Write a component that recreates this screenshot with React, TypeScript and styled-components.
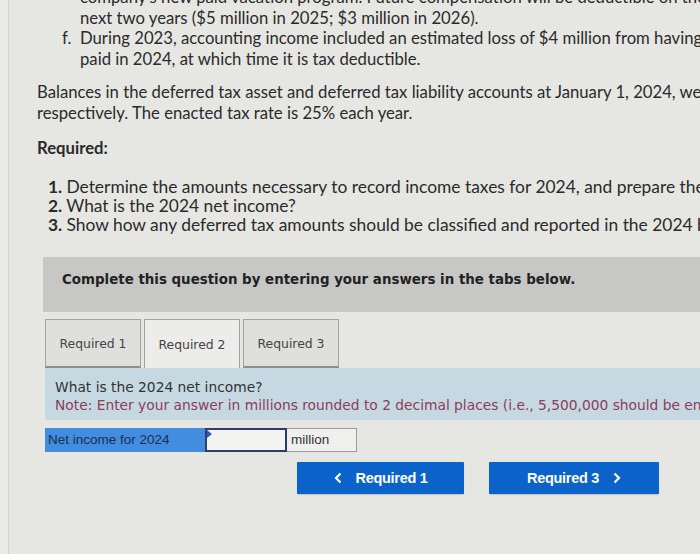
import styled, { createGlobalStyle } from 'styled-components';

const GlobalStyle = createGlobalStyle`
  html, body {
    margin: 0;
    padding: 0;
    background: #e6e6e3;
    overflow: hidden;
  }
`;

const Page = styled.div`
  display: flex;
  width: 700px;
  height: 554px;
  overflow: hidden;
  background: #e6e6e3;
`;

const Gutter = styled.div`
  width: 8px;
  flex-shrink: 0;
  border-right: 1px solid #d2d2cf;
  background: #e9e9e6;
`;

const Main = styled.div`
  flex: 1;
  min-width: 0;
  display: flex;
  flex-direction: column;
`;

const Problem = styled.div`
  font-family: Lato, 'Liberation Sans', sans-serif;
  font-size: 16.7px;
  line-height: 20.5px;
  color: #2b2b2b;
  white-space: nowrap;
  margin-top: -13px;
  padding-left: 28px;
`;

const Item = styled.div`
  display: flex;
`;

const Marker = styled.span<{ $w: number }>`
  display: inline-block;
  width: ${(p) => p.$w}px;
  flex-shrink: 0;
`;

const ItemLines = styled.div`
  display: flex;
  flex-direction: column;
`;

const Paragraph = styled.div`
  margin-top: 13px;
`;

const RequiredTitle = styled.div`
  margin-top: 15px;
  font-weight: bold;
`;

const NumList = styled.div`
  margin-top: 18px;
  padding-left: 11px;
  line-height: 19px;
  font-size: 17.4px;
`;

const Num = styled.b`
  display: inline-block;
  width: 14px;
`;

const Banner = styled.div`
  margin: 23px 0 0 34px;
  height: 55px;
  box-sizing: border-box;
  padding: 15px 0 0 19px;
  background: #c7c7c5;
  font-family: 'DejaVu Sans', Verdana, sans-serif;
  font-weight: bold;
  font-size: 13.4px;
  line-height: 16px;
  color: #222;
  white-space: nowrap;
`;

const TabBar = styled.div`
  display: flex;
  gap: 3px;
  margin: 7px 0 0 36px;
  height: 49px;
`;

const Tab = styled.div<{ $active?: boolean }>`
  width: 96px;
  box-sizing: border-box;
  display: flex;
  align-items: center;
  justify-content: center;
  padding-top: 2px;
  border: 1px solid #a3a3a1;
  border-bottom: ${(p) => (p.$active ? 'none' : '2px solid #8e8e8c')};
  background: ${(p) => (p.$active ? '#ececea' : '#dfdfdc')};
  font-family: 'DejaVu Sans', Verdana, sans-serif;
  font-size: 12.4px;
  color: #444;
`;

const Prompt = styled.div`
  margin-left: 36px;
  height: 52px;
  box-sizing: border-box;
  padding: 10px 0 0 10px;
  background: #c6d9e3;
  font-family: 'DejaVu Sans', Verdana, sans-serif;
  font-size: 13.8px;
  line-height: 18px;
  white-space: nowrap;
  color: #333;
`;

const Note = styled.div`
  color: #8d3d58;
`;

const AnswerRow = styled.div`
  display: flex;
  margin: 8px 0 0 36px;
  height: 24px;
  font-family: 'Liberation Sans', Arial, sans-serif;
  font-size: 13.5px;
`;

const Label = styled.div`
  width: 160px;
  box-sizing: border-box;
  padding-left: 3px;
  display: flex;
  align-items: center;
  background: #438de0;
  color: #1b2d4e;
`;

const Input = styled.input`
  width: 82px;
  box-sizing: border-box;
  border: 2px solid #2d3e6e;
  background: #f4f4f2;
  outline: none;
`;

const InputCell = styled.div`
  position: relative;
  display: flex;
  &::before {
    content: '';
    position: absolute;
    left: 2px;
    top: 2px;
    border-left: 5px solid #2c5fb0;
    border-top: 4px solid transparent;
    border-bottom: 4px solid transparent;
  }
`;

const Unit = styled.div`
  width: 70px;
  box-sizing: border-box;
  padding-left: 4px;
  display: flex;
  align-items: center;
  border: 1px solid #9a9a98;
  border-left: none;
  background: #f0f0ee;
  color: #333;
`;

const NavRow = styled.div`
  display: flex;
  gap: 25px;
  margin: 10px 0 0 288px;
`;

const NavButton = styled.button<{ $w: number }>`
  width: ${(p) => p.$w}px;
  height: 32px;
  display: flex;
  align-items: center;
  justify-content: center;
  gap: 14px;
  border: none;
  border-radius: 1px;
  background: #0b63c9;
  color: #fff;
  font-family: 'Liberation Sans', Arial, sans-serif;
  font-weight: bold;
  font-size: 14.5px;
  letter-spacing: -0.3px;
  box-shadow: 0 1px 1px rgba(0, 0, 0, 0.15);
  cursor: pointer;
`;

const Chevron = ({ dir }: { dir: 'left' | 'right' }) => (
  <svg width="8" height="12" viewBox="0 0 8 12">
    <path
      d={dir === 'left' ? 'M6.5 1.5 L2 6 L6.5 10.5' : 'M1.5 1.5 L6 6 L1.5 10.5'}
      fill="none"
      stroke="#fff"
      strokeWidth="2.2"
    />
  </svg>
);

export default function App() {
  return (
    <Page>
      <GlobalStyle />
      <Gutter />
      <Main>
        <Problem>
          <Item>
            <Marker $w={43} />
            <ItemLines>
              <span>company's new paid vacation program. Future compensation will be deductible on the</span>
              <span>next two years ($5 million in 2025; $3 million in 2026).</span>
            </ItemLines>
          </Item>
          <Item>
            <Marker $w={25} />
            <Marker $w={18}>f.</Marker>
            <ItemLines>
              <span>During 2023, accounting income included an estimated loss of $4 million from having</span>
              <span>paid in 2024, at which time it is tax deductible.</span>
            </ItemLines>
          </Item>
          <Paragraph>
            <div>Balances in the deferred tax asset and deferred tax liability accounts at January 1, 2024, were</div>
            <div>respectively. The enacted tax rate is 25% each year.</div>
          </Paragraph>
          <RequiredTitle>Required:</RequiredTitle>
          <NumList>
            <div>
              <Num>1.</Num> Determine the amounts necessary to record income taxes for 2024, and prepare the
              journal entry
            </div>
            <div>
              <Num>2.</Num> What is the 2024 net income?
            </div>
            <div>
              <Num>3.</Num> Show how any deferred tax amounts should be classified and reported in the 2024 balance
              sheet.
            </div>
          </NumList>
        </Problem>

        <Banner>Complete this question by entering your answers in the tabs below.</Banner>

        <TabBar>
          <Tab>Required 1</Tab>
          <Tab $active>Required 2</Tab>
          <Tab>Required 3</Tab>
        </TabBar>

        <Prompt>
          <div>What is the 2024 net income?</div>
          <Note>
            Note: Enter your answer in millions rounded to 2 decimal places (i.e., 5,500,000 should be entered as
            5.50).
          </Note>
        </Prompt>

        <AnswerRow>
          <Label>Net income for 2024</Label>
          <InputCell>
            <Input type="text" />
          </InputCell>
          <Unit>million</Unit>
        </AnswerRow>

        <NavRow>
          <NavButton $w={167}>
            <Chevron dir="left" />
            Required 1
          </NavButton>
          <NavButton $w={170}>
            Required 3
            <Chevron dir="right" />
          </NavButton>
        </NavRow>
      </Main>
    </Page>
  );
}
